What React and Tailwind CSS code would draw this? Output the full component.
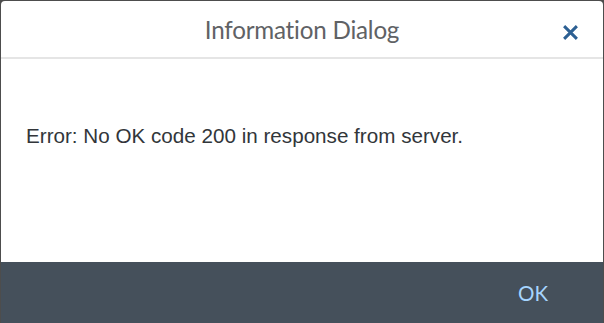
import React from 'react';

export default function App() {
  return (
    <div className="w-[604px] h-[323px] bg-[#4d4d4d] px-px pt-px overflow-hidden">
      <div className="flex h-full flex-col overflow-hidden rounded-t-[4px] bg-white">
        {/* Header */}
        <header className="relative flex h-[58px] shrink-0 items-center justify-center border-b-2 border-[#e5e5e5]">
          <h1 className="pt-[2px] text-[24.2px] text-[#606265] font-['Lato',sans-serif] tracking-[-0.2px]">
            Information Dialog
          </h1>
          <button className="absolute right-[24px] top-[23px] text-[#2d6093]" aria-label="Close">
            <svg width="17" height="17" viewBox="0 0 16 16" fill="none" stroke="currentColor" strokeWidth="2.8" strokeLinecap="butt">
              <path d="M2 2 L14 14 M14 2 L2 14" />
            </svg>
          </button>
        </header>

        {/* Body */}
        <main className="flex-1 px-[25px] pt-[62px]">
          <p className="text-[20.65px] text-[#32363a] font-['Liberation_Sans',Arial,sans-serif]">
            Error: No OK code 200 in response from server.
          </p>
        </main>

        {/* Footer */}
        <footer className="flex h-[61px] shrink-0 items-center justify-end bg-[#45505b] pr-[55px]">
          <button className="pt-[1px] text-[20.5px] text-[#a6d5ff] font-['Lato',sans-serif]">OK</button>
        </footer>
      </div>
    </div>
  );
}
